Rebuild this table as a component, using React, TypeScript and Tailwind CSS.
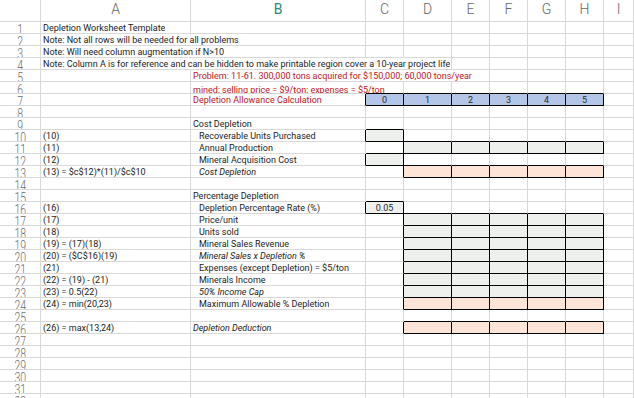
import clsx from 'clsx'

// ─── Sheet data ───────────────────────────────────────────────────────────────

type Fill = 'blue' | 'gray' | 'orange'
type Tone = 'plain' | 'red' | 'italic'

interface Text {
  text: string
  tone?: Tone
  indent?: boolean
  drop?: boolean // wrapped overflow line, sits low and gets clipped
}

const COLS = ['A', 'B', 'C', 'D', 'E', 'F', 'G', 'H', 'I']
const ROWS = Array.from({ length: 32 }, (_, i) => i + 1)

const FILL_BG: Record<Fill, string> = {
  blue: 'bg-[#b4c6e7]',
  gray: 'bg-[#eef0ed]',
  orange: 'bg-[#fce4d6]',
}

const COL_A: Record<number, Text> = {
  1: { text: 'Depletion Worksheet Template' },
  2: { text: 'Note: Not all rows will be needed for all problems' },
  3: { text: 'Note: Will need column augmentation if N>10' },
  4: { text: 'Note: Column A is for reference and can be hidden to make printable region cover a 10-year project life' },
  10: { text: '(10)' },
  11: { text: '(11)' },
  12: { text: '(12)' },
  13: { text: '(13) = $c$12)*(11)/$c$10' },
  16: { text: '(16)' },
  17: { text: '(17)' },
  18: { text: '(18)' },
  19: { text: '(19) = (17)(18)' },
  20: { text: '(20) = ($C$16)(19)' },
  21: { text: '(21)' },
  22: { text: '(22) = (19) - (21)' },
  23: { text: '(23) = 0.5(22)' },
  24: { text: '(24) = min(20,23)' },
  26: { text: '(26) = max(13,24)' },
}

const COL_B: Record<number, Text> = {
  5: { text: 'Problem: 11-61. 300,000 tons acquired for $150,000; 60,000 tons/year', tone: 'red' },
  6: { text: 'mined; selling price = $9/ton; expenses = $5/ton', tone: 'red', drop: true },
  7: { text: 'Depletion Allowance Calculation', tone: 'red' },
  9: { text: 'Cost Depletion' },
  10: { text: 'Recoverable Units Purchased', indent: true },
  11: { text: 'Annual Production', indent: true },
  12: { text: 'Mineral Acquisition Cost', indent: true },
  13: { text: 'Cost Depletion', indent: true, tone: 'italic' },
  15: { text: 'Percentage Depletion' },
  16: { text: 'Depletion Percentage Rate (%)', indent: true },
  17: { text: 'Price/unit', indent: true },
  18: { text: 'Units sold', indent: true },
  19: { text: 'Mineral Sales Revenue', indent: true },
  20: { text: 'Mineral Sales x Depletion %', indent: true, tone: 'italic' },
  21: { text: 'Expenses (except Depletion) = $5/ton', indent: true },
  22: { text: 'Minerals Income', indent: true },
  23: { text: '50% Income Cap', indent: true, tone: 'italic' },
  24: { text: 'Maximum Allowable % Depletion', indent: true },
  26: { text: 'Depletion Deduction', tone: 'italic' },
}

const fills = new Map<string, Fill>()
const values = new Map<string, string>()
const paint = (r: number, c0: number, c1: number, f: Fill) => {
  for (let c = c0; c <= c1; c++) fills.set(`${r}:${c}`, f)
}

paint(7, 2, 7, 'blue')
paint(10, 2, 2, 'gray')
paint(11, 3, 7, 'gray')
paint(12, 2, 2, 'gray')
paint(13, 3, 7, 'orange')
paint(16, 2, 2, 'gray')
for (let r = 17; r <= 23; r++) paint(r, 3, 7, 'gray')
paint(24, 3, 7, 'orange')
paint(26, 3, 7, 'orange')

for (let c = 2; c <= 7; c++) values.set(`7:${c}`, String(c - 2))
values.set('16:2', '0.05')

const boxed = (r: number, c: number) => fills.has(`${r}:${c}`)

// ─── Cells ────────────────────────────────────────────────────────────────────

function CellText({ t }: { t: Text }) {
  return (
    <span
      className={clsx(
        'relative z-10 inline-block h-[11px] overflow-hidden whitespace-nowrap bg-white align-top text-[9px] leading-[11px]',
        t.drop ? 'pt-[3px]' : 'pt-[1px]',
        t.tone === 'red' ? 'text-[#c0161d]' : 'text-[#1b1b1b]',
        t.tone === 'italic' && 'italic',
      )}
    >
      {t.text}
    </span>
  )
}

function Cell({ r, c }: { r: number; c: number }) {
  const fill = fills.get(`${r}:${c}`)
  const value = values.get(`${r}:${c}`)
  const t = c === 0 ? COL_A[r] : c === 1 ? COL_B[r] : undefined
  const darkRight = boxed(r, c) || boxed(r, c + 1)
  const darkBottom = boxed(r, c) || boxed(r + 1, c)

  return (
    <div
      className={clsx(
        'h-[12px] border-b border-r',
        darkRight ? 'border-r-black' : 'border-r-[#d9d9d9]',
        darkBottom ? 'border-b-black' : 'border-b-[#d9d9d9]',
        fill && FILL_BG[fill],
        t && (t.indent ? 'pl-[8px]' : 'pl-[2px]'),
        value && 'text-center',
      )}
    >
      {t && <CellText t={t} />}
      {value && (
        <span className="inline-block align-top pt-[1px] text-[9px] leading-[10px] text-[#2a2a2a]">
          {value}
        </span>
      )}
    </div>
  )
}

// ─── Sheet ────────────────────────────────────────────────────────────────────

const GRID = 'grid grid-cols-[41px_150px_175px_38px_48px_38px_38px_38px_38px_30px]'

export default function App() {
  return (
    <div className="h-[398px] w-[634px] overflow-hidden bg-white font-['Roboto',sans-serif]">
      {/* Column letters */}
      <div className={GRID}>
        <div className="h-[22px] border-b border-r border-[#d9d9d9]" />
        {COLS.map(l => (
          <div
            key={l}
            className={clsx(
              'h-[22px] border-b border-r border-[#d9d9d9] text-center text-[14px] leading-[18px]',
              l === 'B' ? 'text-[#2b8a78]' : 'font-light text-[#666]',
            )}
          >
            {l}
          </div>
        ))}
      </div>

      {/* Rows */}
      {ROWS.map(r => (
        <div key={r} className={GRID}>
          <div className="flex h-[12px] justify-center overflow-hidden border-b border-r border-[#d9d9d9] pt-[1px]">
            <span className="inline-block scale-x-[0.7] text-[15px] font-light leading-[15px] text-[#6b6b6b]">
              {r}
            </span>
          </div>
          {COLS.map((_, c) => (
            <Cell key={c} r={r} c={c} />
          ))}
        </div>
      ))}
    </div>
  )
}
